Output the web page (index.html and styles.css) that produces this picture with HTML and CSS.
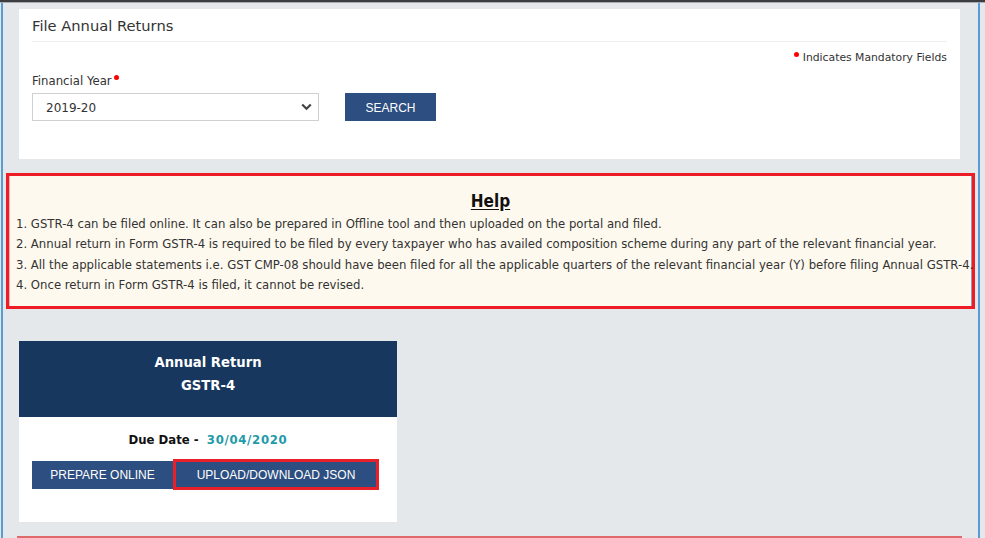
FILE: index.html
```
<!DOCTYPE html>
<html>
<head>
<meta charset="utf-8">
<link rel="stylesheet" href="styles.css">
</head>
<body>
<div class="topline"></div>
<div class="frame">
  <div class="card search-card">
    <div class="card-title">File Annual Returns</div>
    <div class="mandatory"><span class="dot"></span>Indicates Mandatory Fields</div>
    <div class="field-label">Financial Year<span class="dot"></span></div>
    <div class="search-row">
      <div class="select">
        <span>2019-20</span>
        <svg class="chev" width="11" height="8" viewBox="0 0 11 8"><path d="M1.2 1.5 L5.5 5.8 L9.8 1.5" fill="none" stroke="#444" stroke-width="2.2"/></svg>
      </div>
      <button class="btn search-btn">SEARCH</button>
    </div>
  </div>

  <div class="help">
    <div class="help-title">Help</div>
    <div class="help-line">1. GSTR-4 can be filed online. It can also be prepared in Offline tool and then uploaded on the portal and filed.</div>
    <div class="help-line">2. Annual return in Form GSTR-4 is required to be filed by every taxpayer who has availed composition scheme during any part of the relevant financial year.</div>
    <div class="help-line">3. All the applicable statements i.e. GST CMP-08 should have been filed for all the applicable quarters of the relevant financial year (Y) before filing Annual GSTR-4.</div>
    <div class="help-line">4. Once return in Form GSTR-4 is filed, it cannot be revised.</div>
  </div>

  <div class="return-card">
    <div class="return-head">
      <div>Annual Return</div>
      <div>GSTR-4</div>
    </div>
    <div class="return-body">
      <div class="due">Due Date -&nbsp; <span class="due-date">30/04/2020</span></div>
      <div class="btn-row">
        <button class="btn prepare-btn">PREPARE ONLINE</button>
        <button class="btn upload-btn">UPLOAD/DOWNLOAD JSON</button>
      </div>
    </div>
  </div>

  <div class="next-box"></div>
</div>
</body>
</html>
```
FILE: styles.css
```
html, body {
  margin: 0;
  padding: 0;
  background: #e4e8eb;
  overflow: hidden;
  height: 538px;
}
body {
  font-family: "DejaVu Sans", "Liberation Sans", sans-serif;
  color: #333;
}
.topline {
  height: 2px;
  background: #3b3d40;
  border-bottom: 1px solid #a9adb1;
}
.frame {
  margin-left: 1px;
  width: 979px;
  height: 535px;
  box-sizing: border-box;
  border-left: 2px solid #5b9bd5;
  border-right: 2px solid #5b9bd5;
  padding-top: 6px;
}
.card {
  background: #fff;
}
.search-card {
  margin-left: 16px;
  width: 941px;
  height: 150px;
  box-sizing: border-box;
  padding: 6px 13px 0 13px;
}
.card-title {
  font-size: 14.7px;
  line-height: 22px;
  color: #333;
  padding-bottom: 4px;
  border-bottom: 1px solid #eceeef;
}
.mandatory {
  margin-top: 9px;
  text-align: right;
  font-size: 10.8px;
  line-height: 14px;
  color: #333;
}
.dot {
  display: inline-block;
  width: 5px;
  height: 5px;
  border-radius: 50%;
  background: #f00;
  vertical-align: top;
  margin-top: 1px;
}
.mandatory .dot {
  margin-right: 4px;
}
.field-label {
  margin-top: 8px;
  font-size: 11.7px;
  line-height: 16px;
  color: #333;
}
.field-label .dot {
  margin-left: 2px;
  margin-top: 2px;
}
.search-row {
  margin-top: 4px;
  display: flex;
  gap: 26px;
}
.select {
  width: 287px;
  height: 28px;
  box-sizing: border-box;
  border: 1px solid #cfd2d4;
  display: flex;
  align-items: center;
  justify-content: space-between;
  padding: 2px 6px 0 13px;
  font-size: 12px;
  color: #333;
}
.chev {
  display: block;
  margin-top: -2px;
}
.btn {
  border: none;
  margin: 0;
  padding: 0;
  background: #2c4e80;
  color: #fff;
  font-family: "Liberation Sans", Arial, sans-serif;
  font-size: 12px;
  cursor: pointer;
}
.search-btn {
  width: 91px;
  height: 28px;
  padding-top: 2px;
}
.help {
  margin: 14px 0 0 3px;
  width: 969px;
  height: 136px;
  box-sizing: border-box;
  border: 3px solid #ee1c25;
  background: #fef9ee;
  box-shadow: inset -1px 0 0 #8e9bb3, inset 1px 0 0 #f4b4b4;
  padding: 14px 0 0 7px;
  color: #333;
}
.help-title {
  text-align: center;
  font-size: 17px;
  font-weight: bold;
  font-family: "DejaVu Sans Condensed", "DejaVu Sans", sans-serif;
  text-decoration: underline;
  text-underline-offset: 2px;
  line-height: 22px;
  color: #111;
  margin-bottom: 2px;
  padding-right: 7px;
}
.help-line {
  font-size: 11.7px;
  line-height: 20.4px;
  white-space: nowrap;
}
.return-card {
  margin: 32px 0 0 16px;
  width: 378px;
}
.return-head {
  height: 76px;
  box-sizing: border-box;
  background: #17375e;
  color: #fff;
  font-weight: bold;
  font-size: 13.2px;
  line-height: 23px;
  text-align: center;
  padding-top: 10px;
}
.return-body {
  background: #fff;
  height: 105px;
  box-sizing: border-box;
  padding-top: 14px;
}
.due {
  text-align: center;
  font-weight: bold;
  font-family: "DejaVu Sans Condensed", "DejaVu Sans", sans-serif;
  font-size: 13px;
  line-height: 18px;
  color: #111;
}
.due-date {
  color: #1e9aa8;
  letter-spacing: 0.7px;
}
.btn-row {
  margin-top: 10px;
  padding-left: 13px;
  display: flex;
  align-items: center;
}
.prepare-btn {
  width: 141px;
  height: 28px;
}
.upload-btn {
  width: 206px;
  height: 31px;
  box-sizing: border-box;
  border: 3px solid #e8202a;
}
.next-box {
  margin: 14px 0 0 14px;
  width: 945px;
  height: 20px;
  border-top: 2px solid #e06a6a;
  background: #fff;
}
```
